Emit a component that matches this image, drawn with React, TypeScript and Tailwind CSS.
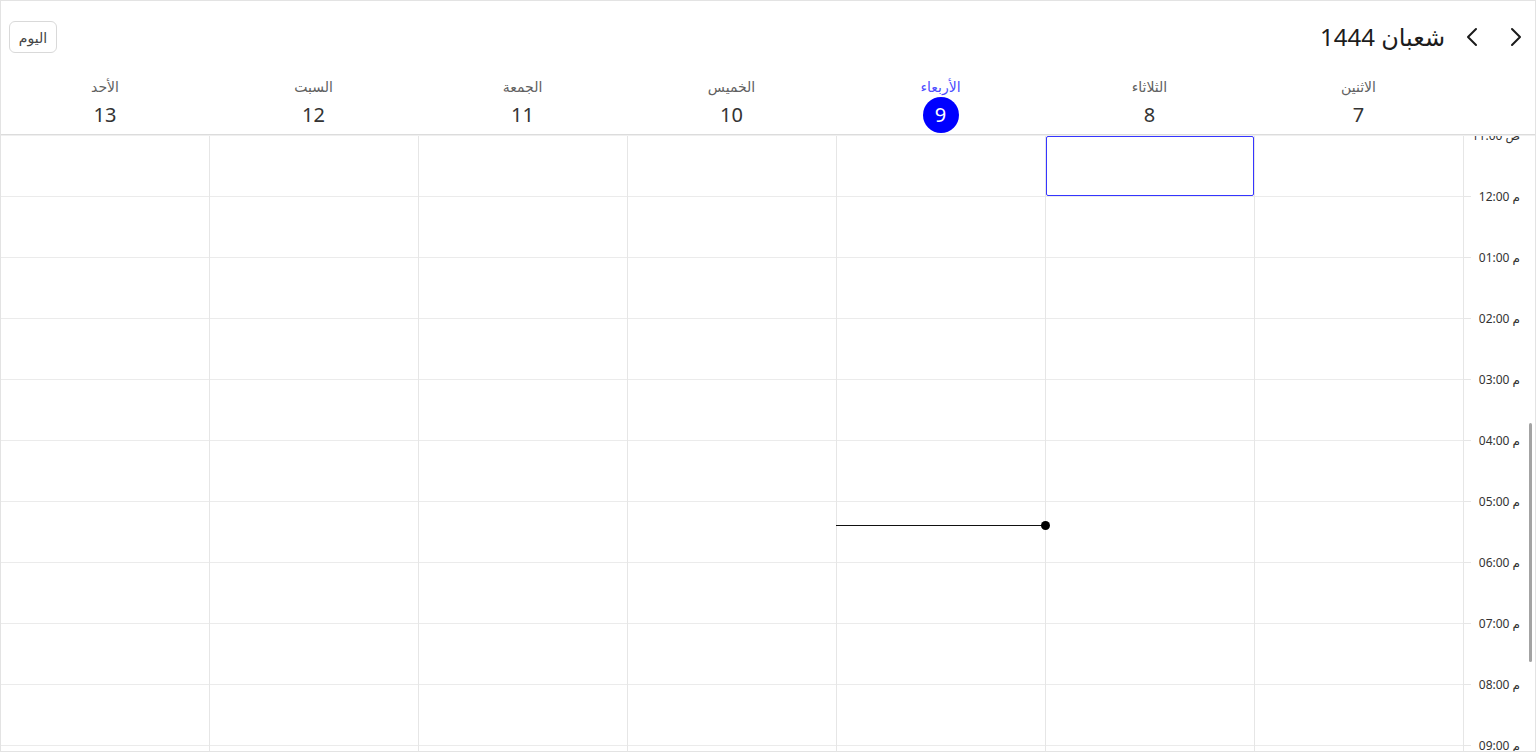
import React from 'react'

const days = [
  { name: 'الاثنين', num: 7 },
  { name: 'الثلاثاء', num: 8 },
  { name: 'الأربعاء', num: 9, today: true },
  { name: 'الخميس', num: 10 },
  { name: 'الجمعة', num: 11 },
  { name: 'السبت', num: 12 },
  { name: 'الأحد', num: 13 },
]

const hours = [
  '11:00 ص',
  '12:00 م',
  '01:00 م',
  '02:00 م',
  '03:00 م',
  '04:00 م',
  '05:00 م',
  '06:00 م',
  '07:00 م',
  '08:00 م',
  '09:00 م',
]

function Chevron({ dir }: { dir: 'left' | 'right' }) {
  return (
    <svg width="12" height="20" viewBox="0 0 12 20" fill="none" stroke="#1a1a1a" strokeWidth="2" strokeLinecap="round" strokeLinejoin="round">
      {dir === 'right' ? <polyline points="2,2 10,10 2,18" /> : <polyline points="10,2 2,10 10,18" />}
    </svg>
  )
}

export default function App() {
  return (
    <div
      dir="rtl"
      className="w-[1536px] h-[752px] border border-[#e3e3e3] bg-white flex flex-col overflow-hidden"
      style={{ fontFamily: '"Noto Sans", "DejaVu Sans", sans-serif' }}
    >
      {/* Header */}
      <div className="h-[134px] shrink-0 border-b border-[#dcdcdc] flex flex-col">
        <div className="h-[72px] flex items-center justify-between pr-[3px] pl-2">
          <div className="flex items-center">
            <button className="w-8 h-8 flex items-center justify-center">
              <Chevron dir="right" />
            </button>
            <button className="w-8 h-8 flex items-center justify-center mr-3">
              <Chevron dir="left" />
            </button>
            <span className="mr-[11px] text-[24px] leading-8 text-[#1c1c1c]">شعبان 1444</span>
          </div>
          <button className="w-12 h-8 rounded-md border border-[#d9d9d9] text-[14px] text-[#444] flex items-center justify-center">
            اليوم
          </button>
        </div>
        <div className="grid grid-cols-[72px_repeat(6,209px)_1fr] h-[61px]">
          <div />
          {days.map(d => (
            <div key={d.num} className="flex flex-col items-center pt-1">
              <span className={`text-[14px] leading-5 ${d.today ? 'text-[#4d4dff]' : 'text-[#616161]'}`}>{d.name}</span>
              {d.today ? (
                <span className="w-9 h-9 rounded-full bg-[#0000ff] text-white text-[20px] flex items-center justify-center">
                  {d.num}
                </span>
              ) : (
                <span className="h-9 text-[20px] leading-9 text-[#333]">{d.num}</span>
              )}
            </div>
          ))}
        </div>
      </div>

      {/* Body */}
      <div className="relative flex-1 overflow-hidden border-t border-[#efefef]">
        <div className="grid grid-cols-[72px_repeat(6,209px)_1fr] h-full">
          {/* time column */}
          <div className="border-l border-[#e6e6e6] flex flex-col -mt-[31px]">
            {hours.map(h => (
              <div key={h} className="h-[61px] shrink-0 flex items-center justify-between pr-[15px]">
                <span dir="ltr" className="text-[12px] text-[#333]">{h}</span>
                <span className="w-[7px] h-px bg-[#e6e6e6]" />
              </div>
            ))}
          </div>
          {days.map((d, i) => (
            <div
              key={d.num}
              className={`relative flex flex-col ${i < days.length - 1 ? 'border-l border-[#e6e6e6]' : ''}`}
            >
              {hours.map((h, r) => (
                <div key={h} className="h-[61px] shrink-0 border-b border-[#ebebeb]">
                  {d.num === 8 && r === 0 && (
                    <div className="h-full border border-[#3535ff] rounded-[2px]" />
                  )}
                </div>
              ))}
              {d.today && (
                <div className="absolute top-[389px] left-[-1px] right-[-1px] h-px bg-[#111]">
                  <span className="absolute right-[-4px] top-[-4px] w-[9px] h-[9px] rounded-full bg-black" />
                </div>
              )}
            </div>
          ))}
        </div>
        <div className="absolute right-[3px] top-[287px] w-[3px] h-[239px] rounded-full bg-[#a3a3a3]" />
      </div>
    </div>
  )
}
